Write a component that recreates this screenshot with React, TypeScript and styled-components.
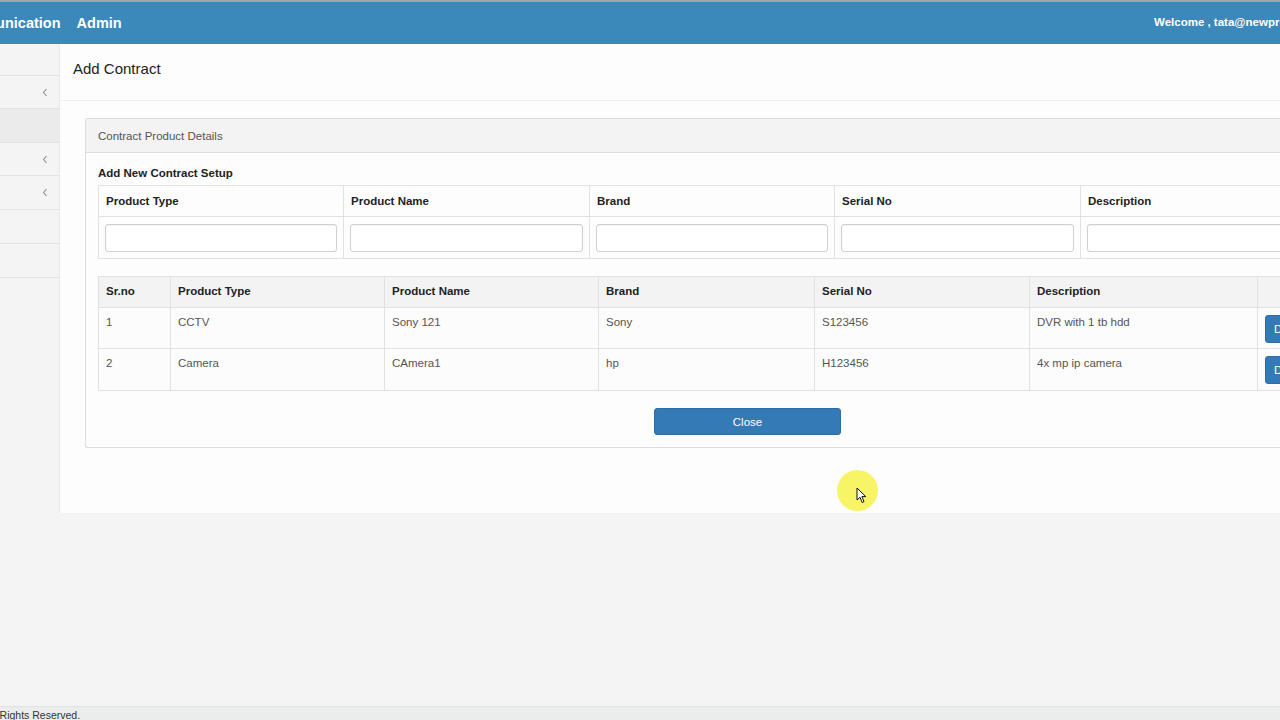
import React from "react";
import styled, { createGlobalStyle } from "styled-components";

const GlobalStyle = createGlobalStyle`
  html, body { margin: 0; padding: 0; }
  body {
    font-family: "Liberation Sans", Arial, sans-serif;
    background: #f3f4f3;
    overflow: hidden;
  }
  * { box-sizing: border-box; }
`;

const Page = styled.div`
  position: relative;
  width: 1280px;
  height: 720px;
  overflow: hidden;
  display: flex;
  flex-direction: column;
  background: #f3f4f3;
`;

const TopBar = styled.header`
  flex-shrink: 0;
  height: 44px;
  border-top: 2px solid #a2a4a6;
  background: #3a89ba;
  display: grid;
  grid-template-columns: 1154px auto;
  align-items: center;
  white-space: nowrap;
  color: #fff;
  font-weight: bold;
`;

const Brand = styled.div`
  display: flex;
  align-items: center;
  gap: 16px;
  margin-left: -49px;
  font-size: 14.5px;
  padding-bottom: 1px;
`;

const Welcome = styled.div`
  font-size: 11.5px;
  padding-bottom: 3px;
`;

const Body = styled.div`
  display: flex;
  flex-shrink: 0;
  align-items: flex-start;
`;

const Sidebar = styled.nav`
  width: 60px;
  flex-shrink: 0;
  display: flex;
  flex-direction: column;
`;

const SideItem = styled.div<{ $h: number; $active?: boolean }>`
  height: ${(p) => p.$h}px;
  border-bottom: 1px solid #e2e3e2;
  background: ${(p) => (p.$active ? "#ebebeb" : "transparent")};
  display: flex;
  align-items: center;
  justify-content: flex-end;
  padding-right: 12px;
`;

const Main = styled.main`
  flex: 1;
  min-width: 0;
  height: 469px;
  overflow: hidden;
  background: #fcfdfc;
  border-left: 1px solid #e8e9e8;
  margin-left: -1px;
`;

const ContentHeader = styled.div`
  height: 57px;
  border-bottom: 1px solid #eef0ee;
  padding: 16px 0 0 13px;
  font-size: 15px;
  line-height: 18px;
  color: #222;
`;

const Panel = styled.section`
  width: 1325px;
  margin: 17px 0 0 25px;
  border: 1px solid #dcdddc;
  border-radius: 2px;
  background: #fdfdfd;
`;

const PanelHeading = styled.div`
  height: 34px;
  background: #f2f3f2;
  border-bottom: 1px solid #dcdddc;
  padding: 1px 12px 0;
  font-size: 11.5px;
  line-height: 33px;
  color: #555;
`;

const PanelBody = styled.div`
  padding: 13px 12px 12px;
  display: flex;
  flex-direction: column;
`;

const SetupTitle = styled.div`
  font-size: 11.5px;
  font-weight: bold;
  line-height: 14px;
  color: #222;
  margin-bottom: 5px;
`;

const FormGrid = styled.div`
  display: grid;
  grid-template-columns: 245px 246px 245px 246px 245px 1fr;
  border-top: 1px solid #e0e1e0;
  border-left: 1px solid #e0e1e0;
`;

const FormHead = styled.div`
  height: 31px;
  padding: 0 7px;
  border-right: 1px solid #e0e1e0;
  border-bottom: 1px solid #e0e1e0;
  font-size: 11.5px;
  font-weight: bold;
  line-height: 30px;
  color: #222;
`;

const FormCell = styled.div`
  height: 42px;
  padding: 7px 6px;
  border-right: 1px solid #e0e1e0;
  border-bottom: 1px solid #e0e1e0;
`;

const TextInput = styled.input`
  display: block;
  width: 100%;
  height: 28px;
  border: 1px solid #cfd0cf;
  border-radius: 3px;
  background: #fff;
  box-shadow: inset 0 1px 1px rgba(0, 0, 0, 0.05);
`;

const ListGrid = styled.div`
  margin-top: 17px;
  display: grid;
  grid-template-columns: 72px 214px 214px 216px 215px 228px 1fr;
  border-top: 1px solid #e0e1e0;
  border-left: 1px solid #e0e1e0;
`;

const ListHead = styled.div`
  height: 31px;
  padding: 0 7px;
  background: #f2f3f2;
  border-right: 1px solid #e0e1e0;
  border-bottom: 1px solid #e0e1e0;
  font-size: 11.5px;
  font-weight: bold;
  line-height: 29px;
  color: #222;
`;

const ListCell = styled.div<{ $h: number }>`
  height: ${(p) => p.$h}px;
  padding: 7px 7px 0;
  background: #fcfcfc;
  border-right: 1px solid #e0e1e0;
  border-bottom: 1px solid #e0e1e0;
  font-size: 11.5px;
  line-height: 14px;
  color: #555;
  white-space: nowrap;
`;

const ActionCell = styled.div<{ $h: number }>`
  height: ${(p) => p.$h}px;
  padding: 7px 7px 0;
  background: #fcfcfc;
  border-right: 1px solid #e0e1e0;
  border-bottom: 1px solid #e0e1e0;
`;

const RowButton = styled.button`
  height: 28px;
  padding: 0 8px;
  border: 1px solid #2e6da4;
  border-radius: 3px;
  background: #337ab7;
  color: #fff;
  font-family: "Liberation Sans", Arial, sans-serif;
  font-size: 11.5px;
`;

const CloseButton = styled.button`
  align-self: center;
  margin-top: 17px;
  width: 187px;
  height: 27px;
  border: 1px solid #2e6da4;
  border-radius: 3px;
  background: #337ab7;
  color: #fff;
  font-family: "Liberation Sans", Arial, sans-serif;
  font-size: 11.5px;
`;

const Filler = styled.div`
  flex: 1;
`;

const Footer = styled.footer`
  flex-shrink: 0;
  height: 14px;
  background: #ebeded;
  border-top: 1px solid #e0e2e2;
  padding-top: 2px;
  font-size: 10.5px;
  line-height: 13px;
  color: #333;
  white-space: nowrap;
`;

const FooterText = styled.span`
  display: inline-block;
  margin-left: -15px;
`;

const CursorMark = styled.div`
  position: absolute;
  left: 837px;
  top: 470px;
  width: 41px;
  height: 41px;
  border-radius: 50%;
  background: rgba(246, 242, 80, 0.88);
`;

const CursorArrow = styled.svg`
  position: absolute;
  left: 19px;
  top: 17px;
`;

const Chevron = () => (
  <svg width="6" height="9" viewBox="0 0 6 9">
    <path d="M4.5 1 L1.5 4.5 L4.5 8" fill="none" stroke="#8a8f98" strokeWidth="1.1" />
  </svg>
);

const sideItems = [
  { h: 32, chev: false },
  { h: 33, chev: true },
  { h: 34, chev: false, active: true },
  { h: 33, chev: true },
  { h: 34, chev: true },
  { h: 34, chev: false },
  { h: 34, chev: false },
];

const formCols = ["Product Type", "Product Name", "Brand", "Serial No", "Description", ""];
const listCols = ["Sr.no", "Product Type", "Product Name", "Brand", "Serial No", "Description", ""];
const rows = [
  { h: 41, cells: ["1", "CCTV", "Sony 121", "Sony", "S123456", "DVR with 1 tb hdd"] },
  { h: 42, cells: ["2", "Camera", "CAmera1", "hp", "H123456", "4x mp ip camera"] },
];

export default function App() {
  return (
    <>
      <GlobalStyle />
      <Page>
        <TopBar>
          <Brand>
            <span>Communication</span>
            <span>Admin</span>
          </Brand>
          <Welcome>Welcome , tata@newproject.com</Welcome>
        </TopBar>
        <Body>
          <Sidebar>
            {sideItems.map((s, i) => (
              <SideItem key={i} $h={s.h} $active={s.active}>
                {s.chev && <Chevron />}
              </SideItem>
            ))}
          </Sidebar>
          <Main>
            <ContentHeader>Add Contract</ContentHeader>
            <Panel>
              <PanelHeading>Contract Product Details</PanelHeading>
              <PanelBody>
                <SetupTitle>Add New Contract Setup</SetupTitle>
                <FormGrid>
                  {formCols.map((c, i) => (
                    <FormHead key={i}>{c}</FormHead>
                  ))}
                  {formCols.map((c, i) => (
                    <FormCell key={i}>{c && <TextInput type="text" />}</FormCell>
                  ))}
                </FormGrid>
                <ListGrid>
                  {listCols.map((c, i) => (
                    <ListHead key={i}>{c}</ListHead>
                  ))}
                  {rows.map((r, ri) => (
                    <React.Fragment key={ri}>
                      {r.cells.map((c, ci) => (
                        <ListCell key={ci} $h={r.h}>
                          {c}
                        </ListCell>
                      ))}
                      <ActionCell $h={r.h}>
                        <RowButton>Delete</RowButton>
                      </ActionCell>
                    </React.Fragment>
                  ))}
                </ListGrid>
                <CloseButton>Close</CloseButton>
              </PanelBody>
            </Panel>
          </Main>
        </Body>
        <Filler />
        <Footer>
          <FooterText>All Rights Reserved.</FooterText>
        </Footer>
        <CursorMark>
          <CursorArrow width="12" height="17" viewBox="0 0 12 17">
            <path
              d="M1 1 L1 13 L4 10.3 L6.2 15.5 L8 14.7 L5.9 9.6 L9.8 9.6 Z"
              fill="#fff"
              stroke="#111"
              strokeWidth="1"
              strokeLinejoin="round"
            />
          </CursorArrow>
        </CursorMark>
      </Page>
    </>
  );
}
